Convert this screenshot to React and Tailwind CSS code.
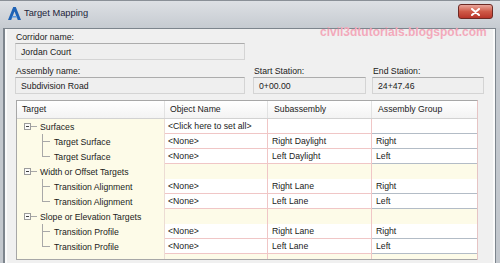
import React from "react";

const rows = [
  { type: "group", label: "Surfaces", obj: "<Click here to set all>", white: true },
  { type: "child", label: "Target Surface", obj: "<None>", sub: "Right Daylight", grp: "Right" },
  { type: "child", label: "Target Surface", obj: "<None>", sub: "Left Daylight", grp: "Left", last: true },
  { type: "group", label: "Width or Offset Targets" },
  { type: "child", label: "Transition Alignment", obj: "<None>", sub: "Right Lane", grp: "Right" },
  { type: "child", label: "Transition Alignment", obj: "<None>", sub: "Left Lane", grp: "Left", last: true },
  { type: "group", label: "Slope or Elevation Targets" },
  { type: "child", label: "Transition Profile", obj: "<None>", sub: "Right Lane", grp: "Right" },
  { type: "child", label: "Transition Profile", obj: "<None>", sub: "Left Lane", grp: "Left", last: true },
];

const Field = ({ label, value, width, className = "" }) => (
  <div className={`${width} ${className}`}>
    <div className="h-[12px] leading-[12px] pl-[1px]">{label}</div>
    <div className="h-[17px] leading-[16px] pl-[5px] bg-[#efefef] border border-[#d4d4d4] border-t-[#acacac]">
      {value}
    </div>
  </div>
);

const TargetCell = ({ row }) => {
  if (row.type === "group") {
    return (
      <div className="w-[148px] h-full flex items-center pl-[7px] bg-[#fdfbe8] border-r border-[#ecdcd4]">
        <svg width="13" height="15" viewBox="0 0 13 15">
          <rect x="0.5" y="4.5" width="6" height="6" fill="#fafafa" stroke="#9c9c9c" />
          <line x1="2" y1="7.5" x2="5" y2="7.5" stroke="#404040" />
          <line x1="7" y1="7.5" x2="13" y2="7.5" stroke="#a8a8a8" />
        </svg>
        <span className="ml-[3px]">{row.label}</span>
      </div>
    );
  }
  return (
    <div className="w-[148px] h-full flex items-center pl-[24px] bg-[#fdfbe8] border-r border-[#ecdcd4]">
      <svg width="10" height="15" viewBox="0 0 10 15">
        <line x1="1.5" y1="0" x2="1.5" y2={row.last ? 8 : 15} stroke="#a8a8a8" />
        <line x1="1.5" y1="7.5" x2="9" y2="7.5" stroke="#a8a8a8" />
      </svg>
      <span className="ml-[3px]">{row.label}</span>
    </div>
  );
};

const Row = ({ row }) => {
  const white = row.type === "child" || row.white;
  const cell = white
    ? "bg-white border-b border-[#b3bcc6]"
    : "bg-[#fdfbe8]";
  return (
    <div className="h-[15px] flex leading-[14px]">
      <TargetCell row={row} />
      <div className={`w-[103px] pl-[3px] whitespace-nowrap overflow-hidden border-r border-[#f0c6c6] ${cell}`}>
        {row.obj}
      </div>
      <div className={`w-[104px] pl-[4px] border-r border-[#f0c6c6] ${cell}`}>{row.sub}</div>
      <div className={`w-[105px] pl-[4px] ${cell}`}>{row.grp}</div>
    </div>
  );
};

export default function App() {
  return (
    <div
      className="w-[500px] h-[263px] overflow-hidden flex flex-col bg-[#c3c8ce] text-[8.7px] text-[#1b1b1b] relative"
      style={{ fontFamily: '"Liberation Sans", Arial, sans-serif' }}
    >
      {/* title bar */}
      <div className="h-[28px] flex items-start bg-gradient-to-b from-[#dde0e4] to-[#c6cbd1] border-t border-[#8a9097]">
        <svg className="ml-[8px] mt-[6px]" width="13" height="13" viewBox="0 0 13 13">
          <path d="M5.2 0 H7.8 L13 13 H9.8 L6.5 4.6 L3.2 13 H0 Z" fill="#1f63b5" />
          <path d="M4.3 9 H8.7 L9.3 10.6 H3.7 Z" fill="#5c9ae0" />
        </svg>
        <span className="ml-[3px] mt-[6px] text-[9.3px] text-[#1e1f3a] leading-[13px]">Target Mapping</span>
        <div className="ml-auto mr-[7px] mt-[3px] w-[35px] h-[15px] rounded-[3px] border border-[#6e2a24] bg-gradient-to-b from-[#e8a59b] via-[#cf5a48] to-[#b8352a] flex items-center justify-center">
          <svg width="9" height="8" viewBox="0 0 9 8">
            <path d="M1 1 L8 7 M8 1 L1 7" stroke="#ffffff" strokeWidth="2" strokeLinecap="round" />
          </svg>
        </div>
      </div>

      {/* content */}
      <div className="flex-1 flex pl-[3px] pr-[5px]">
        <div className="flex-1 bg-[#f0f0f0] border-l-2 border-r border-t border-[#7d858d] shadow-[inset_2px_0_0_#fbfbfb,inset_-2px_0_0_#fbfbfb] pl-[10px] pr-[11px] pt-[2px]">
          <Field label="Corridor name:" value="Jordan Court" width="w-[230px]" />
          <div className="flex mt-[5px]">
            <Field label="Assembly name:" value="Subdivision Road" width="w-[230px]" />
            <Field label="Start Station:" value="0+00.00" width="w-[113px]" className="ml-[8px]" />
            <Field label="End Station:" value="24+47.46" width="w-[112px]" className="ml-[6px]" />
          </div>

          {/* target table */}
          <div className="ml-[1px] mt-[6px] w-[462px] border-l border-r border-t border-[#a7a7a7] border-r-[#e6c4c4]">
            <div className="h-[18px] flex leading-[17px] bg-gradient-to-b from-white to-[#f3f3f3] border-b border-[#d2d2d2]">
              <div className="w-[148px] pl-[5px] border-r border-[#e2e2e2]">Target</div>
              <div className="w-[103px] pl-[5px] border-r border-[#e2e2e2]">Object Name</div>
              <div className="w-[104px] pl-[6px] border-r border-[#e2e2e2]">Subassembly</div>
              <div className="w-[105px] pl-[6px]">Assembly Group</div>
            </div>
            {rows.map((row, i) => (
              <Row key={i} row={row} />
            ))}
            <div className="h-[6px] flex border-b border-[#a7a7a7]">
              <div className="w-[148px] bg-[#fdfbe8] border-r border-[#ecdcd4]" />
              <div className="w-[103px] bg-[#fdfbe8] border-r border-[#f0c6c6]" />
              <div className="w-[104px] bg-[#fdfbe8] border-r border-[#f0c6c6]" />
              <div className="w-[105px] bg-[#fdfbe8]" />
            </div>
          </div>
        </div>
      </div>

      {/* watermark */}
      <div className="absolute left-[320px] top-[25px] text-[12px] font-bold text-[#f3a9bb] leading-[14px]">
        civil3dtutorials.blogspot.com
      </div>
    </div>
  );
}
